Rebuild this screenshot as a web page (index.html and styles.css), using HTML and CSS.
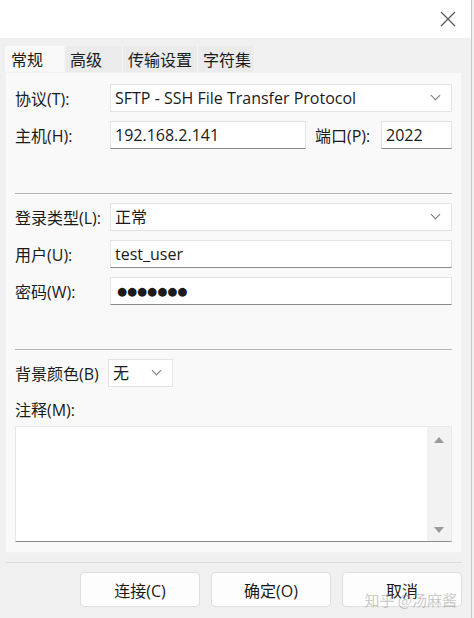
FILE: index.html
```html
<!DOCTYPE html>
<html lang="zh-CN">
<head>
  <meta charset="UTF-8">
  <title>会话属性</title>
  <link rel="stylesheet" href="styles.css">
</head>
<body>
  <div class="window">
    <div class="titlebar">
      <svg class="close" width="16" height="16" viewBox="0 0 16 16">
        <path d="M1 1 L15 15 M15 1 L1 15" stroke="#555" stroke-width="1.2" fill="none"/>
      </svg>
    </div>

    <div class="body">
      <div class="tabs">
        <div class="tab active">常规</div>
        <div class="tab">高级</div>
        <div class="tab">传输设置</div>
        <div class="tab">字符集</div>
      </div>

      <div class="panel">
        <div class="row">
          <label>协议(T):</label>
          <div class="field select wide">SFTP - SSH File Transfer Protocol<span class="caret"></span></div>
        </div>
        <div class="row">
          <label>主机(H):</label>
          <div class="field host">192.168.2.141</div>
          <label class="port-label">端口(P):</label>
          <div class="field port">2022</div>
        </div>

        <hr class="sep">

        <div class="row">
          <label>登录类型(L):</label>
          <div class="field select wide">正常<span class="caret"></span></div>
        </div>
        <div class="row">
          <label>用户(U):</label>
          <div class="field wide">test_user</div>
        </div>
        <div class="row">
          <label>密码(W):</label>
          <div class="field wide dots">●●●●●●●</div>
        </div>

        <hr class="sep">

        <div class="row bg-row">
          <label class="short">背景颜色(B)</label>
          <div class="field select color">无<span class="caret"></span></div>
        </div>
        <div class="note-label">注释(M):</div>
        <div class="note">
          <div class="note-text"></div>
          <div class="scrollbar">
            <span class="arrow up"></span>
            <span class="arrow down"></span>
          </div>
        </div>
      </div>

      <div class="buttons">
        <button>连接(C)</button>
        <button>确定(O)</button>
        <button>取消</button>
      </div>
      <div class="watermark">知乎 @汤麻酱</div>
    </div>
  </div>
</body>
</html>
```

FILE: styles.css
```css
* {
  margin: 0;
  padding: 0;
  box-sizing: border-box;
}

body {
  width: 474px;
  height: 618px;
  overflow: hidden;
  background: #f0f0f0;
  font-family: "Open Sans", "Noto Sans CJK SC", sans-serif;
  font-size: 16px;
  color: #1a1a1a;
}

.window {
  width: 472px;
  height: 618px;
  border-right: 1px solid #c8c8c8;
  background: #f0f0f0;
  position: relative;
}

.titlebar {
  height: 38px;
  background: #fff;
  display: flex;
  justify-content: flex-end;
  align-items: center;
  padding-right: 15px;
}

.body {
  padding: 8px 9px 0 5px;
  position: relative;
  height: 580px;
}

/* Tabs */
.tabs {
  display: flex;
  height: 26px;
}

.tab {
  padding: 0 5px;
  line-height: 26px;
  background: #ebebeb;
  border-right: 1px solid #f5f5f5;
  white-space: nowrap;
  font-family: "Noto Sans CJK SC", sans-serif;
}

.tab:nth-child(2) { width: 58px; }
.tab:nth-child(3) { width: 75px; }
.tab:nth-child(4) { width: 57px; }

.tab.active {
  background: #f9f9f9;
  width: 60px;
  padding-left: 6px;
}

/* Panel */
.panel {
  background: #f9f9f9;
  border: 1px solid #f2f2f2;
  height: 481px;
  padding: 11px 9px 0 9px;
}

.row {
  display: flex;
  align-items: center;
  height: 28px;
  margin-bottom: 9px;
}

label {
  width: 95px;
  flex-shrink: 0;
  white-space: nowrap;
}

.field {
  height: 28px;
  background: #fff;
  border: 1px solid #e4e4e4;
  border-bottom-color: #8a8a8a;
  padding: 0 4px;
  line-height: 26px;
  position: relative;
  white-space: nowrap;
}

.field.select {
  border-bottom-color: #e4e4e4;
}

.wide { flex: 1; }

.host { width: 196px; }

.port-label {
  width: 66px;
  margin-left: 9px;
}

.port { flex: 1; }

.dots {
  font-size: 11.5px;
  padding-left: 6px;
  font-family: "DejaVu Sans", sans-serif;
}

.caret {
  position: absolute;
  right: 12px;
  top: 7px;
  width: 7px;
  height: 7px;
  border-right: 1px solid #777;
  border-bottom: 1px solid #777;
  transform: rotate(45deg);
}

.sep {
  border: none;
  border-top: 1px solid #b5b5b5;
  border-bottom: 1px solid #fff;
  margin: 44px 0 8px;
}

.bg-row label.short { width: 93px; }

.color { width: 65px; }

.note-label {
  height: 28px;
  line-height: 28px;
  margin-bottom: 2px;
}

.note {
  display: flex;
  height: 116px;
  background: #fff;
  border: 1px solid #e8e8e8;
  border-bottom: 1px solid #8a8a8a;
}

.note-text { flex: 1; }

.scrollbar {
  width: 24px;
  background: #f2f2f2;
  display: flex;
  flex-direction: column;
  justify-content: space-between;
  align-items: center;
  padding: 10px 0 8px;
}

.arrow {
  width: 0;
  height: 0;
  border-left: 5px solid transparent;
  border-right: 5px solid transparent;
}

.arrow.up { border-bottom: 6px solid #9a9a9a; }
.arrow.down { border-top: 6px solid #9a9a9a; }

/* Buttons */
.buttons {
  border-top: 1px solid #dcdcdc;
  margin-top: 9px;
  padding-top: 9px;
  display: flex;
  justify-content: flex-end;
  gap: 11px;
}

button {
  width: 120px;
  height: 35px;
  background: #fdfdfd;
  border: 1px solid #dedede;
  border-radius: 4px;
  font-family: "Open Sans", "Noto Sans CJK SC", sans-serif;
  font-size: 16px;
  color: #1a1a1a;
}

.watermark {
  position: absolute;
  right: 14px;
  bottom: 8px;
  font-size: 15px;
  color: rgba(150, 150, 150, 0.5);
  font-family: "Noto Sans CJK SC", sans-serif;
}
```
